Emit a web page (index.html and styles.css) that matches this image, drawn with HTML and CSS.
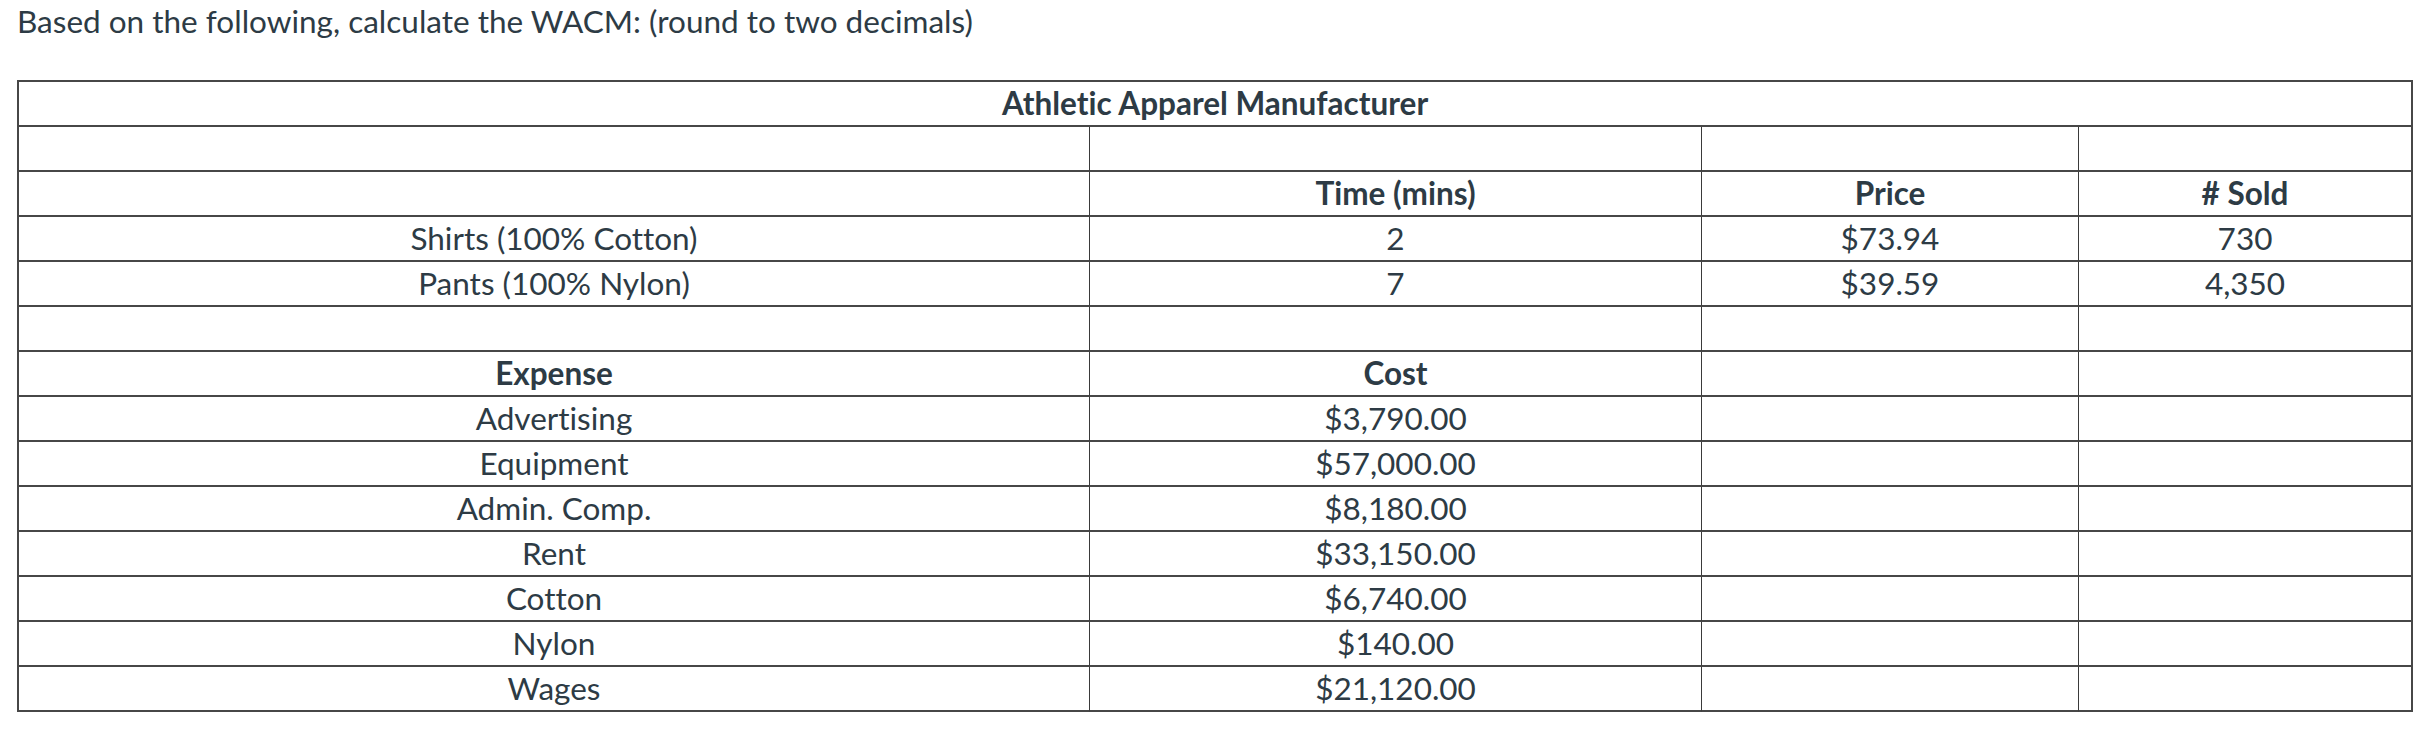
FILE: index.html
```html
<!DOCTYPE html>
<html lang="en">
<head>
<meta charset="utf-8">
<title>WACM</title>
<link rel="stylesheet" href="styles.css">
</head>
<body>
<div class="page">
  <p class="prompt">Based on the following, calculate the WACM: (round to two decimals)</p>
  <table class="data">
    <colgroup>
      <col class="c1"><col class="c2"><col class="c3"><col class="c4">
    </colgroup>
    <tbody>
      <tr><td class="bold" colspan="4">Athletic Apparel Manufacturer</td></tr>
      <tr><td></td><td></td><td></td><td></td></tr>
      <tr><td></td><td class="bold">Time (mins)</td><td class="bold">Price</td><td class="bold"># Sold</td></tr>
      <tr><td>Shirts (100% Cotton)</td><td>2</td><td>$73.94</td><td>730</td></tr>
      <tr><td>Pants (100% Nylon)</td><td>7</td><td>$39.59</td><td>4,350</td></tr>
      <tr><td></td><td></td><td></td><td></td></tr>
      <tr><td class="bold">Expense</td><td class="bold">Cost</td><td></td><td></td></tr>
      <tr><td>Advertising</td><td>$3,790.00</td><td></td><td></td></tr>
      <tr><td>Equipment</td><td>$57,000.00</td><td></td><td></td></tr>
      <tr><td>Admin. Comp.</td><td>$8,180.00</td><td></td><td></td></tr>
      <tr><td>Rent</td><td>$33,150.00</td><td></td><td></td></tr>
      <tr><td>Cotton</td><td>$6,740.00</td><td></td><td></td></tr>
      <tr><td>Nylon</td><td>$140.00</td><td></td><td></td></tr>
      <tr><td>Wages</td><td>$21,120.00</td><td></td><td></td></tr>
    </tbody>
  </table>
</div>
</body>
</html>
```

FILE: styles.css
```css
html, body {
  background: #ffffff;
}
body {
  margin: 0;
  font-family: Lato, "Open Sans", "Liberation Sans", sans-serif;
  font-size: 31.5px;
  font-variant-ligatures: none;
  color: #2d3b45;
}
.page {
  padding: 2px 17px 0 17px;
}
.prompt {
  margin: 0 0 40px 0;
  line-height: 38px;
}
.data {
  width: 100%;
  table-layout: fixed;
  border-collapse: separate;
  border-spacing: 0;
  border-top: 2px solid #474747;
  border-left: 2px solid #474747;
}
.c1 { width: 1071px; }
.c2 { width: 612px; }
.c3 { width: 377px; }
.c4 { width: 334px; }
.data td {
  height: 38px;
  padding: 2px 4px 3px 4px;
  line-height: 38px;
  text-align: center;
  vertical-align: top;
  border-right: 1px solid #3a3a3a;
  border-bottom: 2px solid #474747;
  white-space: nowrap;
}
.data td:last-child {
  border-right: 2px solid #474747;
}
.data td.bold {
  font-weight: 700;
}
```
